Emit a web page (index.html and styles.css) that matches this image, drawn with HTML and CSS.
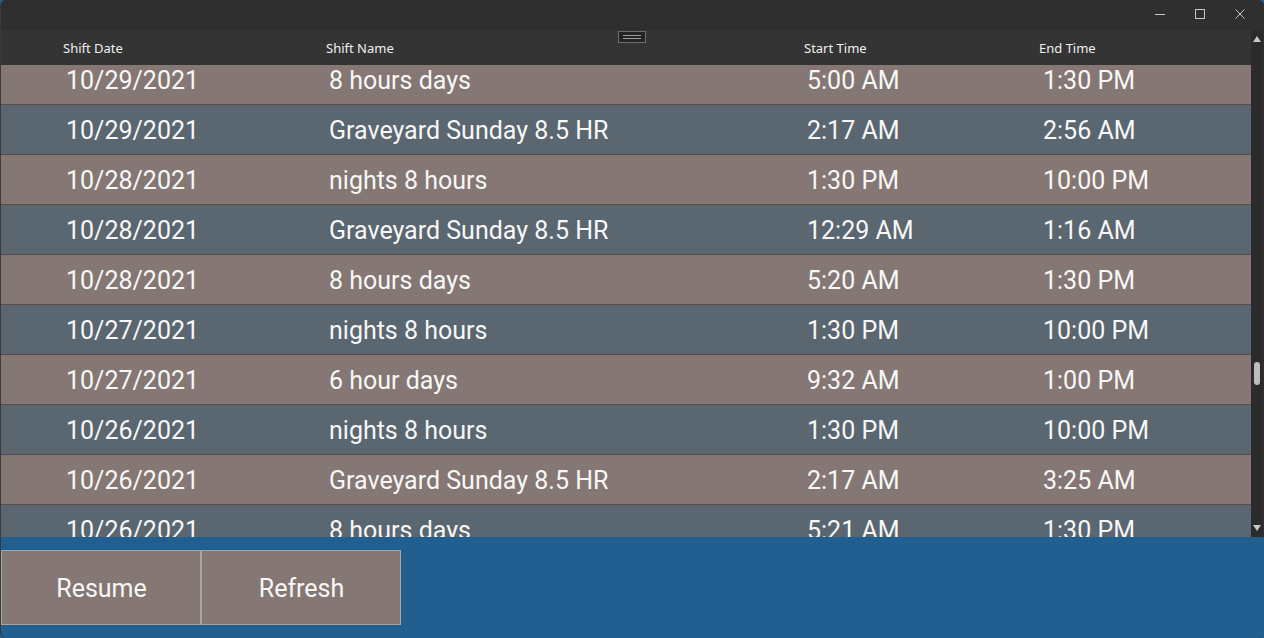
FILE: index.html
```html
<!DOCTYPE html>
<html>
<head>
<meta charset="utf-8">
<link rel="stylesheet" href="styles.css">
</head>
<body>
<div class="window">
  <div class="titlebar">
    <div class="caption-buttons">
      <span class="cap-btn"><svg width="12" height="12" viewBox="0 0 12 12"><path d="M1 6.5h10" stroke="#c8c8c8" stroke-width="1"/></svg></span>
      <span class="cap-btn"><svg width="12" height="12" viewBox="0 0 12 12"><rect x="1.5" y="1.5" width="9" height="9" fill="none" stroke="#c8c8c8" stroke-width="1"/></svg></span>
      <span class="cap-btn"><svg width="12" height="12" viewBox="0 0 12 12"><path d="M1.5 1.5l9 9M10.5 1.5l-9 9" stroke="#c8c8c8" stroke-width="1"/></svg></span>
    </div>
  </div>
  <div class="grid-area">
    <div class="grid-main">
      <div class="grid-header">
        <div class="hcell first">Shift Date</div>
        <div class="hcell">Shift Name</div>
        <div class="hcell">Start Time</div>
        <div class="hcell">End Time</div>
        <div class="handle"><span></span><span></span></div>
      </div>
      <div class="rows-viewport">
        <div class="rows">
          <div class="row tan"><div class="cell first">10/29/2021</div><div class="cell">8 hours days</div><div class="cell">5:00 AM</div><div class="cell last">1:30 PM</div></div>
          <div class="row slate"><div class="cell first">10/29/2021</div><div class="cell">Graveyard Sunday 8.5 HR</div><div class="cell">2:17 AM</div><div class="cell last">2:56 AM</div></div>
          <div class="row tan"><div class="cell first">10/28/2021</div><div class="cell">nights 8 hours</div><div class="cell">1:30 PM</div><div class="cell last">10:00 PM</div></div>
          <div class="row slate"><div class="cell first">10/28/2021</div><div class="cell">Graveyard Sunday 8.5 HR</div><div class="cell">12:29 AM</div><div class="cell last">1:16 AM</div></div>
          <div class="row tan"><div class="cell first">10/28/2021</div><div class="cell">8 hours days</div><div class="cell">5:20 AM</div><div class="cell last">1:30 PM</div></div>
          <div class="row slate"><div class="cell first">10/27/2021</div><div class="cell">nights 8 hours</div><div class="cell">1:30 PM</div><div class="cell last">10:00 PM</div></div>
          <div class="row tan"><div class="cell first">10/27/2021</div><div class="cell">6 hour days</div><div class="cell">9:32 AM</div><div class="cell last">1:00 PM</div></div>
          <div class="row slate"><div class="cell first">10/26/2021</div><div class="cell">nights 8 hours</div><div class="cell">1:30 PM</div><div class="cell last">10:00 PM</div></div>
          <div class="row tan"><div class="cell first">10/26/2021</div><div class="cell">Graveyard Sunday 8.5 HR</div><div class="cell">2:17 AM</div><div class="cell last">3:25 AM</div></div>
          <div class="row slate"><div class="cell first">10/26/2021</div><div class="cell">8 hours days</div><div class="cell">5:21 AM</div><div class="cell last">1:30 PM</div></div>
        </div>
      </div>
    </div>
    <div class="scrollbar">
      <div class="arrow up"></div>
      <div class="track">
        <div class="thumb"></div>
      </div>
      <div class="arrow down"></div>
    </div>
  </div>
  <div class="footer">
    <button class="btn">Resume</button>
    <button class="btn">Refresh</button>
  </div>
</div>
</body>
</html>
```

FILE: styles.css
```css
html, body {
  margin: 0;
  padding: 0;
  background: #225f91;
  overflow: hidden;
}
.window {
  width: 1264px;
  height: 638px;
  display: flex;
  flex-direction: column;
  background: #2f2f2f;
  border-left: 1px solid #3a3a3a;
  box-sizing: border-box;
  border-radius: 6px 6px 6px 6px;
  overflow: hidden;
  font-family: Roboto, "Noto Sans", sans-serif;
}
.titlebar {
  height: 30px;
  flex: none;
  background: #2f2f2f;
  display: flex;
  justify-content: flex-end;
}
.caption-buttons {
  display: flex;
}
.cap-btn {
  width: 40px;
  height: 30px;
  display: flex;
  align-items: center;
  justify-content: center;
  padding-bottom: 2px;
  box-sizing: border-box;
}
.cap-btn:last-child {
  width: 44px;
  padding-right: 4px;
}
.grid-area {
  height: 507px;
  flex: none;
  display: flex;
}
.grid-main {
  flex: 1;
  display: flex;
  flex-direction: column;
  min-width: 0;
}
.grid-header {
  height: 35px;
  flex: none;
  background: #343434;
  display: grid;
  grid-template-columns: 325px 478px 235px 1fr;
  align-items: center;
  position: relative;
}
.hcell {
  font-family: "Noto Sans", "Open Sans", sans-serif;
  font-size: 13px;
  color: #f0f0f0;
  padding-top: 1px;
}
.hcell.first {
  padding-left: 62px;
}
.handle {
  position: absolute;
  left: 617px;
  top: 1px;
  width: 26px;
  height: 10px;
  border: 1px solid #6e6e6e;
  background: #252525;
  display: flex;
  flex-direction: column;
  justify-content: center;
  align-items: center;
  gap: 2px;
}
.handle span {
  display: block;
  width: 18px;
  height: 1px;
  background: #9a9a9a;
}
.rows-viewport {
  flex: 1;
  overflow: hidden;
  background: #5a6670;
}
.rows {
  margin-top: -10px;
}
.row {
  height: 49px;
  border-bottom: 1px solid #5c4848;
  display: grid;
  grid-template-columns: 325px 478px 235px 1fr;
  align-items: center;
  box-sizing: content-box;
}
.row.tan {
  background: #857773;
}
.row.slate {
  background: #5a6670;
}
.cell {
  font-size: 25px;
  color: #f7f7f7;
  padding-left: 3px;
  padding-top: 2px;
  white-space: nowrap;
}
.cell.first {
  padding-left: 65px;
}
.cell.last {
  padding-left: 4px;
}
.scrollbar {
  width: 12px;
  flex: none;
  background: #2b2b2b;
  border-radius: 6px;
  display: flex;
  flex-direction: column;
  align-items: center;
  margin-right: 1px;
}
.arrow {
  width: 0;
  height: 0;
  border-left: 4px solid transparent;
  border-right: 4px solid transparent;
  flex: none;
}
.arrow.up {
  margin-top: 6px;
  border-bottom: 6px solid #c8c8c8;
}
.arrow.down {
  margin-bottom: 6px;
  border-top: 6px solid #c8c8c8;
}
.track {
  flex: 1;
  width: 100%;
  display: flex;
  justify-content: center;
  padding-top: 320px;
  box-sizing: border-box;
}
.thumb {
  width: 6px;
  height: 23px;
  background: #bdbdbd;
  border-radius: 3px;
}
.footer {
  flex: 1;
  background: #225f91;
  display: flex;
  align-items: flex-start;
  padding-top: 13px;
}
.btn {
  width: 200px;
  height: 75px;
  margin: 0;
  background: #857773;
  border: 1px solid #a5a5a5;
  color: #f7f7f7;
  font-family: Roboto, "Noto Sans", sans-serif;
  font-size: 25px;
  padding: 2px 0 0 1px;
}
```
